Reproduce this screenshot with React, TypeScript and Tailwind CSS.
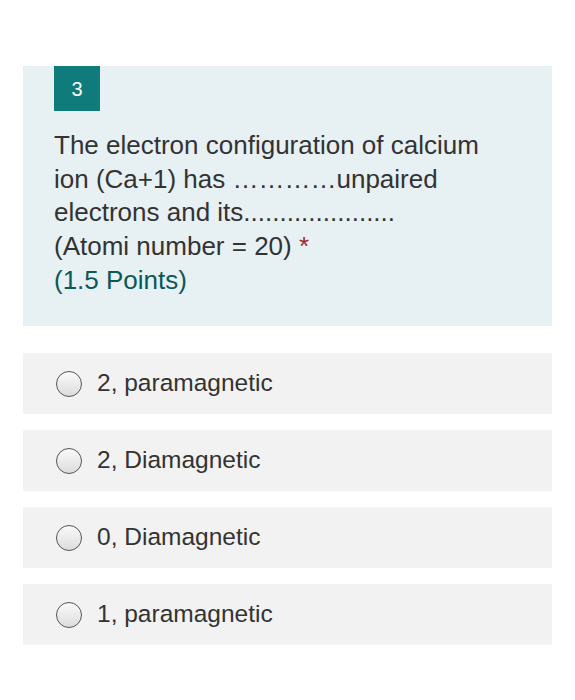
export default function App() {
  const options = ["2, paramagnetic", "2, Diamagnetic", "0, Diamagnetic", "1, paramagnetic"];
  return (
    <div className="w-[575px] h-[700px] bg-white pt-[66px] px-[23px]" style={{ fontFamily: '"Liberation Sans", Arial, sans-serif' }}>
      <div className="bg-[#e7f0f3] h-[260px] px-[31px]">
        <div className="w-[46px] h-[45px] bg-[#0f7b7b] text-white text-[20px] flex items-center justify-center">3</div>
        <div className="mt-[18px] text-[26px] leading-[33.7px] text-[#333333]">
          <div>The electron configuration of calcium</div>
          <div>ion (Ca+1) has …………unpaired</div>
          <div>electrons and its.....................</div>
          <div>(Atomi number = 20) <span className="text-[#a4262c]">*</span></div>
          <div className="text-[#0b5858]">(1.5 Points)</div>
        </div>
      </div>
      <div className="mt-[27px] flex flex-col gap-[16px]">
        {options.map((o) => (
          <div key={o} className="bg-[#f2f2f2] h-[61px] flex items-center pl-[33px]">
            <div className="w-[26px] h-[26px] rounded-full border-[1.5px] border-[#555] bg-gradient-to-b from-[#fafafa] to-[#dcdcdc]" />
            <div className="ml-[15px] text-[24.5px] text-[#333333]">{o}</div>
          </div>
        ))}
      </div>
    </div>
  );
}
